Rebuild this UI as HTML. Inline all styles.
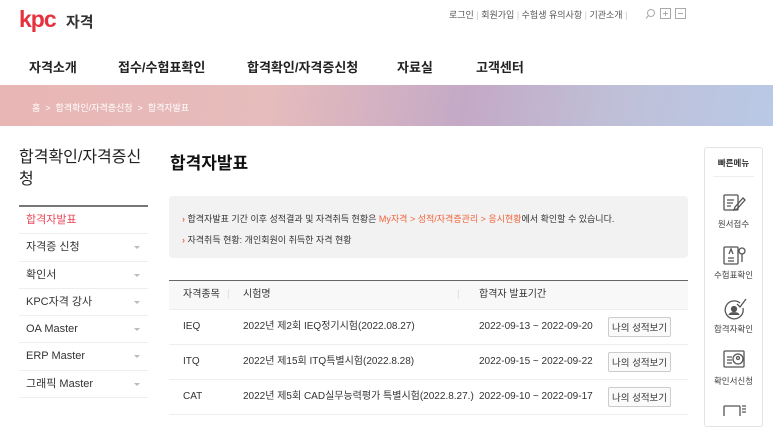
<!DOCTYPE html>
<html><head><meta charset="utf-8"><style>
*{margin:0;padding:0;box-sizing:border-box}
body{width:773px;height:415px;overflow:hidden;background:#fff;font-family:"Liberation Sans","Noto Sans CJK KR",sans-serif;color:#222;position:relative}
.a{position:absolute;white-space:nowrap}
.top{font-size:9px;color:#555;top:8px}
.nav{top:57px;font-size:13px;font-weight:bold;color:#222}
.banner{top:85px;left:0;width:773px;height:41px;background:linear-gradient(100deg,#e8b6b4 0%,#e6bcbc 35%,#c4a9c6 60%,#bfc0d8 80%,#b9c9e6 100%)}
.side{left:19px;width:129px;font-size:11px;color:#333}
.row{height:27.3px;line-height:27px;border-bottom:1px solid #eee;padding-left:7px;position:relative}
.row i{position:absolute;right:8px;top:12px;border-left:3px solid transparent;border-right:3px solid transparent;border-top:3px solid #bbb}
.tbl{left:169px;width:519px;font-size:10px;color:#333}
.tr{height:35px;border-bottom:1px solid #eee;position:relative}
.tr span{position:absolute;top:0;line-height:34px;height:34px}
.btn{position:absolute;left:439px;top:7px;width:63px;height:20px;border:1px solid #ccc;background:#fafafa;border-radius:2px;font-size:9.5px;display:flex;align-items:center;justify-content:center}
.q{left:704px;top:147px;width:59px;height:280px;border:1px solid #e3e3e3;border-radius:3px;background:#fff}
.ql{position:absolute;width:57px;text-align:center;font-size:8.5px;color:#444}
</style></head><body>
<div class="a" style="left:19px;top:6px;font-size:23px;font-weight:bold;color:#e5323d;letter-spacing:-1px;font-family:'Liberation Sans',sans-serif">kpc</div>
<div class="a" style="left:66px;top:11px;font-size:15px;font-weight:bold;color:#333">자격</div>
<div class="a top" style="left:449px">로그인 <span style="color:#ccc">|</span> 회원가입 <span style="color:#ccc">|</span> 수험생 유의사항 <span style="color:#ccc">|</span> 기관소개 <span style="color:#ccc">|</span></div>
<svg class="a" style="left:644px;top:8px" width="44" height="12"><circle cx="7" cy="5" r="3.5" fill="none" stroke="#aaa"/><line x1="4.5" y1="7.5" x2="2" y2="10.5" stroke="#aaa"/><rect x="16.5" y="0.5" width="10" height="10" fill="none" stroke="#aaa"/><path d="M19 5.5h5M21.5 3v5" stroke="#aaa"/><rect x="31.5" y="0.5" width="10" height="10" fill="none" stroke="#aaa"/><path d="M34 5.5h5" stroke="#aaa"/></svg>
<div class="a nav" style="left:29px">자격소개</div>
<div class="a nav" style="left:118px">접수/수험표확인</div>
<div class="a nav" style="left:247px">합격확인/자격증신청</div>
<div class="a nav" style="left:397px">자료실</div>
<div class="a nav" style="left:476px">고객센터</div>
<div class="a banner"></div>
<div class="a" style="left:32px;top:101px;font-size:9px;color:#fff">홈 &nbsp;&gt;&nbsp; 합격확인/자격증신청 &nbsp;&gt;&nbsp; 합격자발표</div>
<div class="a" style="left:19px;top:147px;font-size:16px;line-height:22px;color:#222;white-space:normal;width:130px">합격확인/자격증신청</div>
<div class="a side" style="top:205px;border-top:2px solid #777">
<div class="row" style="color:#e8485a">합격자발표</div>
<div class="row">자격증 신청<i></i></div>
<div class="row">확인서<i></i></div>
<div class="row">KPC자격 강사<i></i></div>
<div class="row">OA Master<i></i></div>
<div class="row">ERP Master<i></i></div>
<div class="row">그래픽 Master<i></i></div>
</div>
<div class="a" style="left:170px;top:149px;font-size:17px;font-weight:bold;color:#111">합격자발표</div>
<div class="a" style="left:169px;top:196px;width:519px;height:62px;background:#f2f2f2;border-radius:4px;font-size:9px;color:#333">
<div class="a" style="left:13px;top:16px"><b style="color:#ef6a4a">›</b> 합격자발표 기간 이후 성적결과 및 자격취득 현황은 <span style="color:#f0643c">My자격 &gt; 성적/자격증관리 &gt; 응시현황</span>에서 확인할 수 있습니다.</div>
<div class="a" style="left:13px;top:37px"><b style="color:#ef6a4a">›</b> 자격취득 현황: 개인회원이 취득한 자격 현황</div>
</div>
<div class="a tbl" style="top:280px;border-top:1px solid #666">
<div class="tr" style="height:29px;background:#f8f8f8"><span style="left:14px;line-height:28px">자격종목</span><span style="left:58px;line-height:28px;color:#ddd">|</span><span style="left:74px;line-height:28px">시험명</span><span style="left:288px;line-height:28px;color:#ddd">|</span><span style="left:310px;line-height:28px">합격자 발표기간</span></div>
<div class="tr"><span style="left:14px">IEQ</span><span style="left:74px">2022년 제2회 IEQ정기시험(2022.08.27)</span><span style="left:310px">2022-09-13 ~ 2022-09-20</span><div class="btn">나의 성적보기</div></div>
<div class="tr"><span style="left:14px">ITQ</span><span style="left:74px">2022년 제15회 ITQ특별시험(2022.8.28)</span><span style="left:310px">2022-09-15 ~ 2022-09-22</span><div class="btn">나의 성적보기</div></div>
<div class="tr"><span style="left:14px">CAT</span><span style="left:74px">2022년 제5회 CAD실무능력평가 특별시험(2022.8.27.)</span><span style="left:310px">2022-09-10 ~ 2022-09-17</span><div class="btn">나의 성적보기</div></div>
</div>
<div class="a q">
<div class="ql" style="top:9px;font-weight:bold;color:#333">빠른메뉴</div>
<div style="position:absolute;left:8px;top:28px;width:41px;border-top:1px solid #eee"></div>
<svg class="a" style="left:18px;top:45px" width="24" height="20" fill="none" stroke="#555" stroke-width="1.3"><rect x="1" y="2" width="14" height="15" rx="1"/><path d="M4 7h7M4 10h6M4 13h4M12 14l8-9 2 2-8 9-3 1z"/></svg>
<div class="ql" style="top:70px">원서접수</div>
<svg class="a" style="left:18px;top:97px" width="24" height="22" fill="none" stroke="#555" stroke-width="1.3"><rect x="1" y="2" width="14" height="17" rx="1"/><path d="M5 13h6M5 16h6M6 9l2-5 2 5"/><circle cx="19" cy="6" r="3"/><path d="M19 9v8"/></svg>
<div class="ql" style="top:121px">수험표확인</div>
<svg class="a" style="left:18px;top:150px" width="24" height="22" fill="none" stroke="#555" stroke-width="1.3"><path d="M17 5a9 9 0 1 0 3 5"/><path d="M14 6l3 3 6-8"/><circle cx="11" cy="11" r="2.5" fill="#555"/><path d="M6 17c1-3 9-3 10 0" fill="#555"/></svg>
<div class="ql" style="top:175px">합격자확인</div>
<svg class="a" style="left:18px;top:201px" width="24" height="20" fill="none" stroke="#555" stroke-width="1.3"><rect x="1" y="2" width="20" height="16" rx="1"/><path d="M4 8h5M4 11h5M4 14h5"/><circle cx="15" cy="10" r="5"/><circle cx="15" cy="9" r="1.5"/></svg>
<div class="ql" style="top:227px">확인서신청</div>
<svg class="a" style="left:18px;top:256px" width="24" height="12" fill="none" stroke="#555" stroke-width="1.3"><rect x="1" y="2" width="16" height="12" rx="1"/><path d="M19 2h4M19 5h4M19 8h4"/></svg>
</div>
</body></html>
